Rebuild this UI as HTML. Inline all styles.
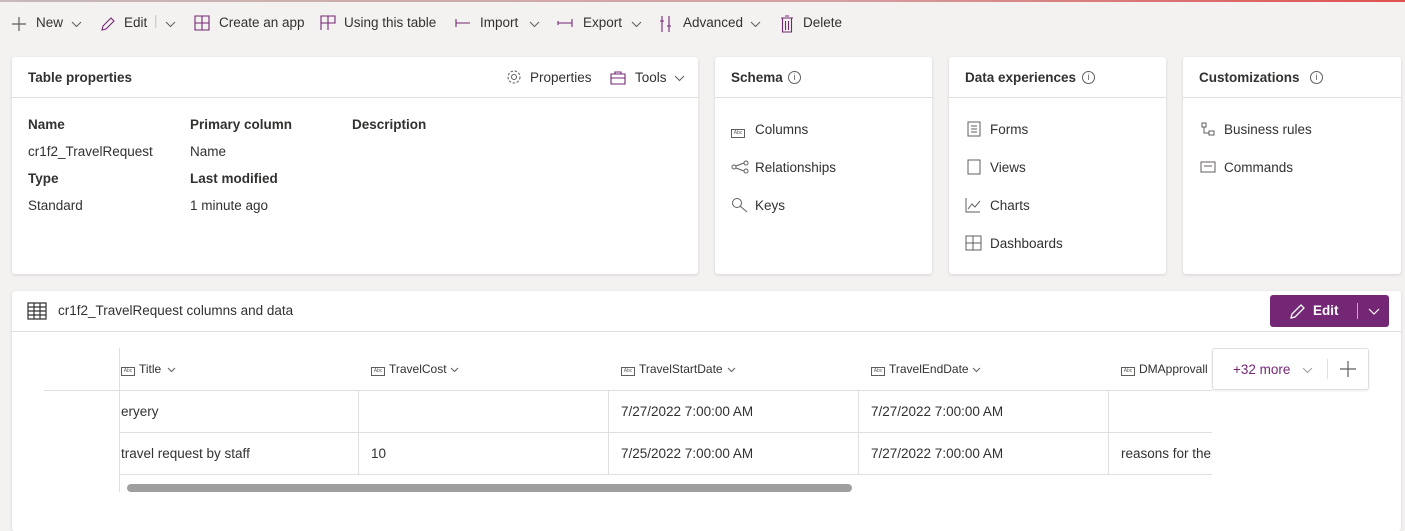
<!DOCTYPE html>
<html><head><style>
*{box-sizing:border-box;margin:0;padding:0}
body{width:1405px;height:515px;background:#f3f2f1;font-family:"Liberation Sans",sans-serif;font-size:13.5px;color:#323130;position:relative;overflow:hidden}
.topline{position:absolute;left:0;top:0;width:1405px;height:2px;background:linear-gradient(90deg,#c8b8b8,#d4a0a0 60%,#e05050)}
.tb{position:absolute;top:14px;left:0;height:20px;font-size:13.5px;color:#323130}
.tb span{position:absolute;white-space:nowrap}
.card{position:absolute;background:#fff;border-radius:3px;box-shadow:0 1px 3px rgba(0,0,0,.13)}
.hd{height:41px;border-bottom:1px solid #e1dfdd;font-weight:bold;font-size:13.5px;padding:13px 16px 0}
.abs{position:absolute;white-space:nowrap}
.b{font-weight:bold}
.lk{position:absolute;white-space:nowrap}
.cell{position:absolute;white-space:nowrap}
.hl{position:absolute;height:1px;background:#e1dfdd}
.vl{position:absolute;width:1px;background:#e1dfdd}
.abc{display:inline-block;width:14px;height:9px;border:1px solid #605e5c;font-size:5px;line-height:7px;text-align:center;vertical-align:1px;margin-right:4px;color:#605e5c}
.chv{position:absolute}
.info{position:absolute;width:13px;height:13px;border:1px solid #605e5c;border-radius:50%;font-size:9px;line-height:11px;text-align:center;color:#605e5c;font-weight:normal}
</style></head><body>
<div class="topline"></div>
<svg width="0" height="0" style="position:absolute"><defs><path id="cv" d="M1 1l4.5 4.5L10 1" fill="none" stroke="#605e5c" stroke-width="1"/></defs></svg>
<div class="tb">
<svg class="abs" style="left:11px;top:2px" width="16" height="16"><path d="M8 1v14M1 8h14" stroke="#605e5c" stroke-width="1.2"/></svg>
<span style="left:36px;top:1px">New</span><svg class="chv" style="left:71px;top:7px" width="11" height="7"><use href="#cv"/></svg>
<svg class="abs" style="left:100px;top:2px" width="16" height="16"><path d="M2 14l1-4 8-8 3 3-8 8z" fill="none" stroke="#742774" stroke-width="1.1"/></svg>
<span style="left:124px;top:1px">Edit</span><span style="left:154px;top:-1px;color:#c8c6c4">|</span><svg class="chv" style="left:165px;top:7px" width="11" height="7"><use href="#cv"/></svg>
<svg class="abs" style="left:194px;top:1px" width="17" height="17"><path d="M1 1h14v14H1zM8 1v14M1 8h14" fill="none" stroke="#742774" stroke-width="1.1"/></svg>
<span style="left:219px;top:1px">Create an app</span>
<svg class="abs" style="left:320px;top:1px" width="16" height="16"><path d="M1 1h14v7H1zM8 1v14M1 8v7" fill="none" stroke="#742774" stroke-width="1.1"/></svg>
<span style="left:344px;top:1px">Using this table</span>
<svg class="abs" style="left:455px;top:4px" width="16" height="10"><path d="M1 5h14M1 1v8" fill="none" stroke="#742774" stroke-width="1.1"/></svg>
<span style="left:480px;top:1px">Import</span><svg class="chv" style="left:529px;top:7px" width="11" height="7"><use href="#cv"/></svg>
<svg class="abs" style="left:557px;top:4px" width="16" height="10"><path d="M1 5h14M15 1v8M1 3v4" fill="none" stroke="#742774" stroke-width="1.1"/></svg>
<span style="left:583px;top:1px">Export</span><svg class="chv" style="left:631px;top:7px" width="11" height="7"><use href="#cv"/></svg>
<svg class="abs" style="left:659px;top:1px" width="14" height="18"><path d="M3 1v16M10 1v16M1 6h4M8 11h4" stroke="#742774" stroke-width="1.1"/></svg>
<span style="left:683px;top:1px">Advanced</span><svg class="chv" style="left:750px;top:7px" width="11" height="7"><use href="#cv"/></svg>
<svg class="abs" style="left:780px;top:1px" width="14" height="18"><path d="M1 3h12M5 1h4M2.5 3v14h9V3M5.5 6v9M8.5 6v9" fill="none" stroke="#742774" stroke-width="1.1"/></svg>
<span style="left:803px;top:1px">Delete</span>
</div>

<div class="card" style="left:12px;top:57px;width:686px;height:217px">
<div class="hd">Table properties</div>
<svg class="abs" style="left:494px;top:12px" width="16" height="16"><circle cx="8" cy="8" r="2.5" fill="none" stroke="#605e5c"/><circle cx="8" cy="8" r="6" fill="none" stroke="#605e5c" stroke-dasharray="2.5 1.6"/></svg>
<span class="abs" style="left:518px;top:13px">Properties</span>
<svg class="abs" style="left:598px;top:14px" width="16" height="14"><path d="M1 3h14v10H1zM5 3V1h6v2M1 7h14" fill="none" stroke="#742774" stroke-width="1.1"/></svg>
<span class="abs" style="left:623px;top:13px">Tools</span><svg class="chv" style="left:662px;top:18px" width="11" height="7"><use href="#cv"/></svg>
<span class="abs b" style="left:16px;top:60px">Name</span>
<span class="abs b" style="left:178px;top:60px">Primary column</span>
<span class="abs b" style="left:340px;top:60px">Description</span>
<span class="abs" style="left:16px;top:87px">cr1f2_TravelRequest</span>
<span class="abs" style="left:178px;top:87px">Name</span>
<span class="abs b" style="left:16px;top:114px">Type</span>
<span class="abs b" style="left:178px;top:114px">Last modified</span>
<span class="abs" style="left:16px;top:141px">Standard</span>
<span class="abs" style="left:178px;top:141px">1 minute ago</span>
</div>

<div class="card" style="left:715px;top:57px;width:217px;height:217px">
<div class="hd">Schema</div><div class="info" style="left:73px;top:14px">i</div>
<span class="abs" style="left:16px;top:66px"><span class="abc">Abc</span></span><span class="lk" style="left:40px;top:65px">Columns</span>
<svg class="abs" style="left:16px;top:103px" width="18" height="14"><circle cx="3" cy="7" r="2" fill="none" stroke="#605e5c"/><circle cx="15" cy="3" r="2" fill="none" stroke="#605e5c"/><circle cx="15" cy="11" r="2" fill="none" stroke="#605e5c"/><path d="M5 6l8-3M5 8l8 3" stroke="#605e5c"/></svg><span class="lk" style="left:40px;top:103px">Relationships</span>
<svg class="abs" style="left:16px;top:140px" width="18" height="16"><circle cx="6" cy="6" r="4.5" fill="none" stroke="#605e5c"/><path d="M9 9l7 6" stroke="#605e5c"/></svg><span class="lk" style="left:40px;top:141px">Keys</span>
</div>

<div class="card" style="left:949px;top:57px;width:217px;height:217px">
<div class="hd">Data experiences</div><div class="info" style="left:133px;top:14px">i</div>
<svg class="abs" style="left:18px;top:64px" width="14" height="16"><path d="M1 1h12v14H1zM4 5h6M4 8h6M4 11h6" fill="none" stroke="#605e5c"/></svg><span class="lk" style="left:41px;top:65px">Forms</span>
<svg class="abs" style="left:18px;top:102px" width="14" height="16"><path d="M1 1h12v14H1z" fill="none" stroke="#605e5c"/></svg><span class="lk" style="left:41px;top:103px">Views</span>
<svg class="abs" style="left:16px;top:140px" width="16" height="16"><path d="M1 1v14h14M3 12l4-5 3 3 5-6" fill="none" stroke="#605e5c"/></svg><span class="lk" style="left:41px;top:141px">Charts</span>
<svg class="abs" style="left:16px;top:178px" width="17" height="16"><path d="M1 1h15v14H1zM8 1v14M8 8h8M1 8h7" fill="none" stroke="#605e5c"/></svg><span class="lk" style="left:41px;top:179px">Dashboards</span>
</div>

<div class="card" style="left:1183px;top:57px;width:218px;height:217px">
<div class="hd">Customizations</div><div class="info" style="left:127px;top:14px">i</div>
<svg class="abs" style="left:17px;top:64px" width="16" height="16"><path d="M2 2h4v4H2zM9 10h5v4H9zM4 6v6h5" fill="none" stroke="#605e5c"/></svg><span class="lk" style="left:41px;top:65px">Business rules</span>
<svg class="abs" style="left:17px;top:104px" width="16" height="12"><path d="M1 1h14v10H1zM4 5h8" fill="none" stroke="#605e5c"/></svg><span class="lk" style="left:41px;top:103px">Commands</span>
</div>

<div class="card" style="left:12px;top:291px;width:1389px;height:240px">
<div class="hd" style="height:41px;font-weight:normal"></div>
<svg class="abs" style="left:15px;top:11px" width="20" height="18"><path d="M1 1h18v16H1zM1 5h18M1 9h18M1 13h18M7 1v16M13 1v16" fill="none" stroke="#323130" stroke-width="1.2"/></svg>
<span class="abs" style="left:46px;top:12px">cr1f2_TravelRequest columns and data</span>
<div class="abs" style="left:1258px;top:4px;width:119px;height:32px;background:#742774;border-radius:3px;color:#fff"></div>
<svg class="abs" style="left:1277px;top:12px" width="17" height="17"><path d="M2 15l1-4 9-9 3 3-9 9z" fill="none" stroke="#fff" stroke-width="1.3"/></svg>
<span class="abs b" style="left:1301px;top:12px;color:#fff">Edit</span>
<div class="abs" style="left:1345px;top:12px;width:1px;height:16px;background:#c9a5c9"></div>
<svg class="abs" style="left:1356px;top:17px" width="12" height="8"><path d="M1 1l5 5 5-5" fill="none" stroke="#fff" stroke-width="1.2"/></svg>

<div class="hl" style="left:32px;top:99px;width:1168px"></div>
<div class="vl" style="left:107px;top:57px;height:144px"></div>
<div class="hl" style="left:107px;top:141px;width:1093px"></div>
<div class="hl" style="left:107px;top:183px;width:1093px"></div>
<div class="vl" style="left:346px;top:99px;height:84px"></div>
<div class="vl" style="left:596px;top:99px;height:84px"></div>
<div class="vl" style="left:846px;top:99px;height:84px"></div>
<div class="vl" style="left:1096px;top:99px;height:84px"></div>
<div class="abs" style="left:115px;top:193px;width:725px;height:8px;border-radius:4px;background:#a19f9d"></div>

<span class="cell" style="left:109px;top:71px;font-size:12px"><span class="abc">Abc</span>Title</span><svg class="chv" style="left:155px;top:76px" width="9" height="6"><path d="M1 1l3.5 3.5L8 1" fill="none" stroke="#605e5c"/></svg>
<span class="cell" style="left:359px;top:71px;font-size:12px"><span class="abc">Abc</span>TravelCost</span><svg class="chv" style="left:438px;top:76px" width="9" height="6"><path d="M1 1l3.5 3.5L8 1" fill="none" stroke="#605e5c"/></svg>
<span class="cell" style="left:609px;top:71px;font-size:12px"><span class="abc">Abc</span>TravelStartDate</span><svg class="chv" style="left:715px;top:76px" width="9" height="6"><path d="M1 1l3.5 3.5L8 1" fill="none" stroke="#605e5c"/></svg>
<span class="cell" style="left:859px;top:71px;font-size:12px"><span class="abc">Abc</span>TravelEndDate</span><svg class="chv" style="left:960px;top:76px" width="9" height="6"><path d="M1 1l3.5 3.5L8 1" fill="none" stroke="#605e5c"/></svg>
<span class="cell" style="left:1109px;top:71px;font-size:12px"><span class="abc">Abc</span>DMApprovall</span>
<span class="cell" style="left:109px;top:113px">eryery</span>
<span class="cell" style="left:597px;top:113px;padding-left:12px">7/27/2022 7:00:00 AM</span>
<span class="cell" style="left:847px;top:113px;padding-left:12px">7/27/2022 7:00:00 AM</span>
<span class="cell" style="left:109px;top:155px">travel request by staff</span>
<span class="cell" style="left:359px;top:155px">10</span>
<span class="cell" style="left:597px;top:155px;padding-left:12px">7/25/2022 7:00:00 AM</span>
<span class="cell" style="left:847px;top:155px;padding-left:12px">7/27/2022 7:00:00 AM</span>
<span class="cell" style="left:1109px;top:155px">reasons for the</span>

<div class="abs" style="left:1200px;top:57px;width:157px;height:42px;background:#fff;border:1px solid #e1dfdd;border-radius:3px;box-shadow:0 1px 2px rgba(0,0,0,.08)"></div>
<span class="abs" style="left:1221px;top:71px;color:#742774">+32 more</span>
<svg class="chv" style="left:1290px;top:76px" width="11" height="7"><path d="M1 1l4.5 4.5L10 1" fill="none" stroke="#a19f9d"/></svg>
<div class="abs" style="left:1315px;top:68px;width:1px;height:20px;background:#e1dfdd"></div>
<svg class="abs" style="left:1328px;top:70px" width="16" height="16"><path d="M8 0v16M0 8h16" stroke="#605e5c" stroke-width="1.2"/></svg>
</div>
</body></html>
